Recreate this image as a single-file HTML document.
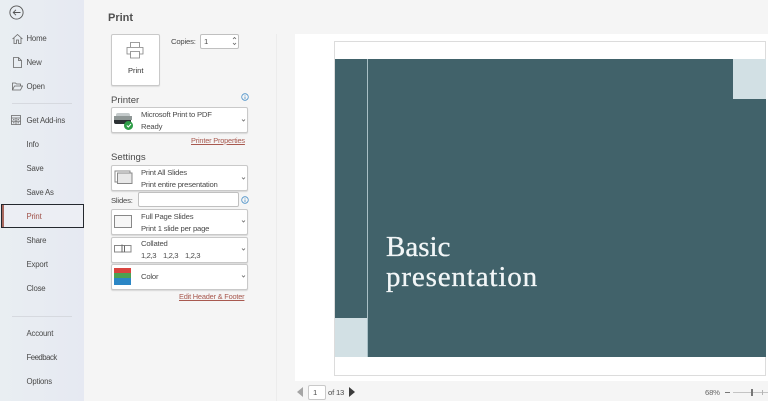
<!DOCTYPE html>
<html>
<head>
<meta charset="utf-8">
<style>
html,body{margin:0;padding:0}
body{width:768px;height:401px;overflow:hidden;position:relative;background:#f5f5f5;font-family:"Liberation Sans",sans-serif;color:#3a3a3a}
.a{position:absolute}
.t{position:absolute;white-space:nowrap;font-size:7.7px;letter-spacing:-.2px;line-height:11px;color:#4a4a4a}
.l{font-size:7.4px;letter-spacing:-.2px;color:#a8594f;text-decoration:underline}
.nav{position:absolute;left:26.5px;white-space:nowrap;font-size:7.8px;letter-spacing:-.2px;line-height:11px;color:#4a4a4a}
.box{position:absolute;left:111px;width:135px;background:#fff;border:1px solid #c9c9c9;border-radius:2px;box-shadow:0 1px 1px rgba(0,0,0,.12)}
.chev{position:absolute;left:241px;width:5px;height:3px}
svg{position:absolute;overflow:visible}
</style>
</head>
<body>
<!-- Sidebar -->
<div class="a" style="left:0;top:0;width:84px;height:401px;background:linear-gradient(90deg,#e9eef2,#e6e9f2)"></div>
<svg style="left:9px;top:5px" width="16" height="16" viewBox="0 0 16 16" fill="none" stroke="#555" stroke-width=".9"><circle cx="7.5" cy="7.5" r="6.6"/><path d="M11.5 7.5H4.2M7 4.8L4.2 7.5L7 10.2"/></svg>
<svg style="left:12px;top:33px" width="12" height="12" viewBox="0 0 12 12" fill="none" stroke="#666" stroke-width=".8"><path d="M.5 6L5.5 1.5L10.5 6M2 5V10.5H4.5V7H6.5V10.5H9V5"/></svg>
<div class="nav" style="top:33px">Home</div>
<svg style="left:12px;top:57px" width="12" height="12" viewBox="0 0 12 12" fill="none" stroke="#666" stroke-width=".8"><path d="M1.5 .5H6.5L9.5 3.5V10.5H1.5ZM6.5 .5V3.5H9.5"/></svg>
<div class="nav" style="top:57px">New</div>
<svg style="left:12px;top:81px" width="12" height="12" viewBox="0 0 12 12" fill="none" stroke="#666" stroke-width=".8"><path d="M.5 9V2H3.5L4.5 3H8.5V5M.5 9L2.5 5H10.5L8.5 9Z"/></svg>
<div class="nav" style="top:81px">Open</div>
<div class="a" style="left:12px;top:103px;width:60px;height:1px;background:#d6d9df"></div>
<svg style="left:11px;top:115px" width="10" height="10" viewBox="0 0 10 10" fill="none" stroke="#666" stroke-width=".8"><path d="M.5 .5H9.5V9.5H.5ZM.5 3H9.5M5 3V9.5M.5 6.2H9.5M2 4.6H3.5M6.5 4.6H8M2 7.8H3.5M6.5 7.8H8"/></svg>
<div class="nav" style="top:115px">Get Add-ins</div>
<div class="nav" style="top:139px">Info</div>
<div class="nav" style="top:163px">Save</div>
<div class="nav" style="top:187px">Save As</div>
<div class="a" style="left:1px;top:204px;width:81px;height:22px;border:1px solid #24282e;background:#eceef4"></div>
<div class="a" style="left:2px;top:205px;width:2px;height:22px;background:#a9685f"></div>
<div class="nav" style="top:211px;color:#a0524a">Print</div>
<div class="nav" style="top:235px">Share</div>
<div class="nav" style="top:259px">Export</div>
<div class="nav" style="top:283px">Close</div>
<div class="a" style="left:12px;top:316px;width:60px;height:1px;background:#d6d9df"></div>
<div class="nav" style="top:328px">Account</div>
<div class="nav" style="top:352px;letter-spacing:-.5px">Feedback</div>
<div class="nav" style="top:376px">Options</div>

<!-- Print column -->
<div class="t" style="left:108px;top:11px;font-size:11px;letter-spacing:0;line-height:14px;font-weight:bold;color:#505050">Print</div>
<div class="a" style="left:111px;top:34px;width:47px;height:50px;background:#fff;border:1px solid #c9c9c9;border-radius:2px;box-shadow:0 1px 1px rgba(0,0,0,.1)"></div>
<svg style="left:126px;top:41px" width="18" height="18" viewBox="0 0 18 18" fill="none" stroke="#808080" stroke-width=".8"><path d="M4.5 6V1.5H13.5V6M4.5 13H1V6.5H17V13H13.5M4.5 10.5H13.5V17H4.5Z"/></svg>
<div class="t" style="left:128px;top:65px;font-size:7.5px;letter-spacing:0;color:#333">Print</div>
<div class="t" style="left:171px;top:36px">Copies:</div>
<div class="a" style="left:200px;top:34px;width:37px;height:13px;background:#fff;border:1px solid #c0c0c0;border-radius:2px"></div>
<div class="t" style="left:204px;top:36px">1</div>
<svg style="left:232px;top:36px" width="5" height="10" viewBox="0 0 5 10" fill="none" stroke="#666" stroke-width=".8"><path d="M1 3L2.5 1.5L4 3M1 7L2.5 8.5L4 7"/></svg>

<div class="t" style="left:111px;top:95px;font-size:9.6px;letter-spacing:0;line-height:12px">Printer</div>
<svg style="left:241px;top:93px" width="8" height="8" viewBox="0 0 8 8" fill="none" stroke="#4a90c8" stroke-width=".8"><circle cx="4" cy="4" r="3.3"/><path d="M4 2.2V2.9M4 3.5V6"/></svg>
<div class="box" style="top:107px;height:24px"></div>
<div class="a" style="left:116px;top:113px;width:14px;height:3px;background:#c4cacb;border-radius:2px 2px 0 0"></div>
<div class="a" style="left:114px;top:116px;width:18px;height:4px;background:#8f9796"></div>
<div class="a" style="left:114px;top:120px;width:17px;height:4px;background:#2b3033;border-radius:0 0 2px 2px"></div>
<div class="a" style="left:124px;top:121px;width:9px;height:9px;background:#2f9e48;border-radius:50%"></div>
<svg style="left:125.5px;top:123px" width="6" height="5" viewBox="0 0 6 5" fill="none" stroke="#fff" stroke-width="1"><path d="M.8 2.5L2.3 4L5 1"/></svg>
<div class="t" style="left:141px;top:109px">Microsoft Print to PDF</div>
<div class="t" style="left:141px;top:121px">Ready</div>
<svg class="chev" style="top:119px" viewBox="0 0 5 3" fill="none" stroke="#666" stroke-width=".8"><path d="M1 .5L2.5 2L4 .5"/></svg>
<div class="t l" style="left:191px;top:135px">Printer Properties</div>

<div class="t" style="left:111px;top:152px;font-size:9.6px;letter-spacing:0;line-height:12px">Settings</div>

<div class="box" style="top:165px;height:24px"></div>
<svg style="left:114px;top:170px" width="19" height="14" viewBox="0 0 19 14" fill="none" stroke="#888" stroke-width="1"><path d="M1 1H16V12H1Z"/><path d="M3.5 3H18V13.5H3.5Z" fill="#e8e8e8"/></svg>
<div class="t" style="left:141px;top:167px">Print All Slides</div>
<div class="t" style="left:141px;top:179px">Print entire presentation</div>
<svg class="chev" style="top:177px" viewBox="0 0 5 3" fill="none" stroke="#666" stroke-width=".8"><path d="M1 .5L2.5 2L4 .5"/></svg>

<div class="t" style="left:111px;top:195px">Slides:</div>
<div class="a" style="left:138px;top:192px;width:99px;height:13px;background:#fff;border:1px solid #c0c0c0;border-radius:2px"></div>
<svg style="left:241px;top:196px" width="8" height="8" viewBox="0 0 8 8" fill="none" stroke="#4a90c8" stroke-width=".8"><circle cx="4" cy="4" r="3.3"/><path d="M4 2.2V2.9M4 3.5V6"/></svg>

<div class="box" style="top:209px;height:24px"></div>
<div class="a" style="left:114px;top:215px;width:16px;height:11px;border:1px solid #888;background:#f6f6f6"></div>
<div class="t" style="left:141px;top:211px">Full Page Slides</div>
<div class="t" style="left:141px;top:223px">Print 1 slide per page</div>
<svg class="chev" style="top:220px" viewBox="0 0 5 3" fill="none" stroke="#666" stroke-width=".8"><path d="M1 .5L2.5 2L4 .5"/></svg>

<div class="box" style="top:237px;height:24px"></div>
<svg style="left:114px;top:244px" width="18" height="9" viewBox="0 0 18 9" fill="none" stroke="#888" stroke-width="1"><path d="M.5 1.5H17V8H.5Z"/><path d="M8 .5V8.5M10.5 1.5V8" stroke="#666"/></svg>
<div class="t" style="left:141px;top:238px">Collated</div>
<div class="t" style="left:141px;top:250px;letter-spacing:-.4px">1,2,3</div>
<div class="t" style="left:163px;top:250px;letter-spacing:-.4px">1,2,3</div>
<div class="t" style="left:185px;top:250px;letter-spacing:-.4px">1,2,3</div>
<svg class="chev" style="top:248px" viewBox="0 0 5 3" fill="none" stroke="#666" stroke-width=".8"><path d="M1 .5L2.5 2L4 .5"/></svg>

<div class="box" style="top:264px;height:24px"></div>
<div class="a" style="left:114px;top:268px;width:17px;height:17px;background:linear-gradient(180deg,#d9443f 0 30%,#4da152 30% 58%,#2b86c5 58%)"></div>
<div class="t" style="left:141px;top:271px">Color</div>
<svg class="chev" style="top:275px" viewBox="0 0 5 3" fill="none" stroke="#666" stroke-width=".8"><path d="M1 .5L2.5 2L4 .5"/></svg>
<div class="t l" style="left:179px;top:291px">Edit Header &amp; Footer</div>

<div class="a" style="left:276px;top:34px;width:1px;height:367px;background:#ececec"></div>

<!-- Preview -->
<div class="a" style="left:295px;top:34px;width:473px;height:347px;background:#fff"></div>
<div class="a" style="left:334px;top:41px;width:430px;height:333px;border:1px solid #dcdcdc;background:#fff"></div>
<div class="a" style="left:335px;top:59px;width:431px;height:298px;background:#41626a"></div>
<div class="a" style="left:367px;top:59px;width:1px;height:298px;background:#a9c0c6"></div>
<div class="a" style="left:733px;top:59px;width:33px;height:40px;background:#d2e0e4"></div>
<div class="a" style="left:335px;top:318px;width:32px;height:39px;background:#d2e0e4"></div>
<div class="a" style="left:386px;top:233px;font-family:'Liberation Serif',serif;font-size:29px;line-height:29.5px;color:#f2f6f7;-webkit-text-stroke:.3px #f2f6f7;white-space:nowrap"><span>Basic</span><br><span style="letter-spacing:.85px">presentation</span></div>

<!-- Bottom bar -->
<svg style="left:297px;top:387px" width="7" height="10" viewBox="0 0 7 10"><path d="M6 0V10L0 5Z" fill="#a5a5a5"/></svg>
<div class="a" style="left:308px;top:385px;width:16px;height:13px;background:#fff;border:1px solid #c9c9c9;border-radius:2px"></div>
<div class="t" style="left:313px;top:387px">1</div>
<div class="t" style="left:328px;top:387px">of 13</div>
<svg style="left:348px;top:387px" width="7" height="10" viewBox="0 0 7 10"><path d="M1 0V10L7 5Z" fill="#3c3c3c"/></svg>
<div class="t" style="left:705px;top:387px;color:#666">68%</div>
<div class="a" style="left:725px;top:392px;width:5px;height:1px;background:#777"></div>
<div class="a" style="left:733px;top:392px;width:35px;height:1px;background:#c4c4c4"></div>
<div class="a" style="left:751px;top:389px;width:2px;height:7px;background:#777"></div>
<div class="a" style="left:762px;top:390px;width:1px;height:5px;background:#b4b4b4"></div>
</body>
</html>
